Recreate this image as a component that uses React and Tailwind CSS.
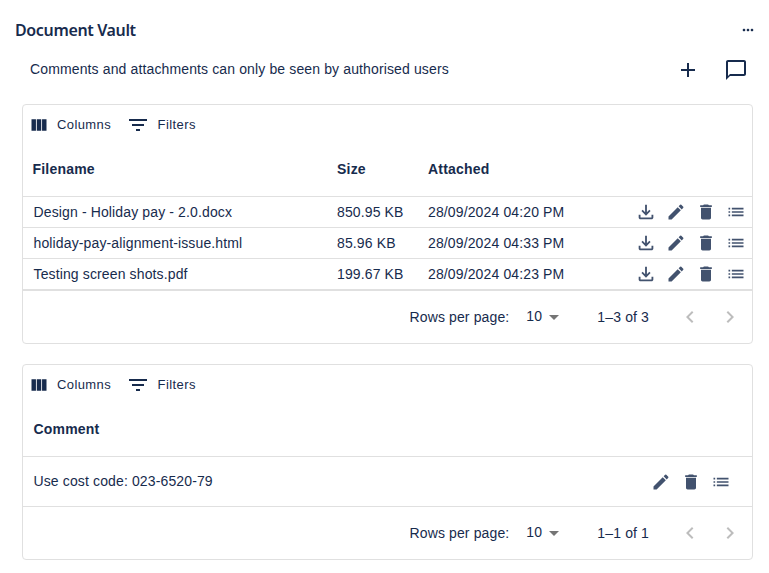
const P = {
  col: "M14.67 5v14H9.33V5h5.34zm1 14H21V5h-5.33v14zm-7.34 0V5H3v14h5.33z",
  filter: "M10 18h4v-2h-4v2zM3 6v2h18V6H3zm3 7h12v-2H6v2z",
  dl: "M18 15v3H6v-3H4v3c0 1.1.9 2 2 2h12c1.1 0 2-.9 2-2v-3h-2zm-1-4-1.41-1.41L13 12.17V4h-2v8.17L8.41 9.59 7 11l5 5 5-5z",
  edit: "M3 17.25V21h3.75L17.81 9.94l-3.75-3.75L3 17.25zM20.71 7.04c.39-.39.39-1.02 0-1.41l-2.34-2.34a.9959.9959 0 0 0-1.41 0l-1.83 1.83 3.75 3.75 1.83-1.83z",
  del: "M6 19c0 1.1.9 2 2 2h8c1.1 0 2-.9 2-2V7H6v12zM19 4h-3.5l-1-1h-5l-1 1H5v2h14V4z",
  list: "M3 13h2v-2H3v2zm0 4h2v-2H3v2zm0-8h2V7H3v2zm4 4h14v-2H7v2zm0 4h14v-2H7v2zM7 7v2h14V7H7z",
  drop: "M7 10l5 5 5-5z",
  left: "M15.41 7.41 14 6l-6 6 6 6 1.41-1.41L10.83 12z",
  right: "M10 6 8.59 7.41 13.17 12l-4.58 4.58L10 18l6-6z",
  add: "M19 13h-6v6h-2v-6H5v-2h6V5h2v6h6v2z",
  chat: "M20 2H4c-1.1 0-2 .9-2 2v18l4-4h14c1.1 0 2-.9 2-2V4c0-1.1-.9-2-2-2zm0 14H6l-2 2V4h16v12z",
  more: "M6 10c-1.1 0-2 .9-2 2s.9 2 2 2 2-.9 2-2-.9-2-2-2zm12 0c-1.1 0-2 .9-2 2s.9 2 2 2 2-.9 2-2-.9-2-2-2zm-6 0c-1.1 0-2 .9-2 2s.9 2 2 2 2-.9 2-2-.9-2-2-2z",
};

function Icon({ d, size = 20, className = "" }) {
  return (
    <svg width={size} height={size} viewBox="0 0 24 24" fill="currentColor" className={"shrink-0 " + className}>
      <path d={d} />
    </svg>
  );
}

function Toolbar() {
  return (
    <div className="flex items-center h-[39px] pl-[6px] text-[13px] tracking-[0.4px] text-[#172b4d]">
      <Icon d={P.col} size={20} />
      <span className="ml-[8px]">Columns</span>
      <Icon d={P.filter} size={24} className="ml-[15px]" />
      <span className="ml-[7.5px]">Filters</span>
    </div>
  );
}

function Actions({ download = true }) {
  return (
    <div className="flex items-center text-[#42526e]">
      {download && (
        <div className="w-[30px] flex justify-center">
          <Icon d={P.dl} size={22} />
        </div>
      )}
      <div className="w-[30px] flex justify-center"><Icon d={P.edit} /></div>
      <div className="w-[30px] flex justify-center"><Icon d={P.del} /></div>
      <div className="w-[30px] flex justify-center"><Icon d={P.list} /></div>
    </div>
  );
}

function Footer({ range, h }) {
  return (
    <div className={"flex items-center justify-end text-[14px] tracking-[0.13px] text-[#172b4d] " + h}>
      <span>Rows per page:</span>
      <span className="ml-[17px] w-[16px] -mt-[2px]">10</span>
      <Icon d={P.drop} size={24} className="text-[#757575] -mt-[1px]" />
      <span className="ml-[31px]">{range}</span>
      <Icon d={P.left} size={24} className="text-[#bdbdbd] ml-[29px]" />
      <Icon d={P.right} size={24} className="text-[#bdbdbd] ml-[16px] mr-[10px]" />
    </div>
  );
}

const rows = [
  ["Design - Holiday pay - 2.0.docx", "850.95 KB", "28/09/2024 04:20 PM"],
  ["holiday-pay-alignment-issue.html", "85.96 KB", "28/09/2024 04:33 PM"],
  ["Testing screen shots.pdf", "199.67 KB", "28/09/2024 04:23 PM"],
];

export default function App() {
  return (
    <div className="w-[769px] h-[573px] overflow-hidden bg-white text-[#172b4d] pt-[19px] pl-[15px] pr-[16px]" style={{ fontFamily: '"Liberation Sans", Arial, sans-serif' }}>
      <div className="flex items-center justify-between h-[22px]">
        <h1 className="text-[16px] font-semibold leading-[22px] tracking-[-0.36px] -mt-[1px]" style={{ fontFamily: '"Noto Sans", sans-serif' }}>Document Vault</h1>
        <Icon d={P.more} size={16} className="mr-[-3px] text-[#172b4d]" />
      </div>
      <div className="flex items-center justify-between ml-[15px] mt-[8px] h-[40px]">
        <span className="text-[14px] tracking-[0.13px]">Comments and attachments can only be seen by authorised users</span>
        <div className="flex items-center gap-[24px] mr-[5px]">
          <Icon d={P.add} size={24} className="mt-[2px] text-[#172b4d]" />
          <Icon d={P.chat} size={24} className="mt-[2px] text-[#172b4d]" />
        </div>
      </div>

      <div className="ml-[7px] mt-[15px] h-[240px] border border-[#e0e0e0] rounded-[4px]">
        <Toolbar />
        <div className="grid grid-cols-[304.5px_91px_1fr] items-center h-[53px] border-b border-[#e0e0e0] pl-[9.5px] pb-[2px] text-[14px] font-bold tracking-[0.2px]">
          <span>Filename</span>
          <span>Size</span>
          <span>Attached</span>
        </div>
        {rows.map((r, i) => (
          <div key={r[0]} className={"grid grid-cols-[303.5px_91px_1fr_auto] items-center pl-[10.5px] pr-[1px] text-[14px] tracking-[0.13px] border-[#e0e0e0] " + (i === 2 ? "h-[32px] border-b-2" : "h-[31px] border-b")}>
            <span>{r[0]}</span>
            <span>{r[1]}</span>
            <span>{r[2]}</span>
            <Actions />
          </div>
        ))}
        <Footer range="1–3 of 3" h="h-[52px]" />
      </div>

      <div className="ml-[7px] mt-[20px] h-[196px] border border-[#e0e0e0] rounded-[4px]">
        <Toolbar />
        <div className="flex items-center h-[53px] border-b border-[#e0e0e0] pl-[10.5px] pb-[2px] text-[14px] font-bold tracking-[0.2px]">
          Comment
        </div>
        <div className="flex items-center justify-between h-[50px] border-b border-[#e0e0e0] pl-[10.5px] pr-[16px] text-[14px] tracking-[0.13px]">
          <span>Use cost code: 023-6520-79</span>
          <Actions download={false} />
        </div>
        <Footer range="1–1 of 1" h="h-[52px]" />
      </div>
    </div>
  );
}
